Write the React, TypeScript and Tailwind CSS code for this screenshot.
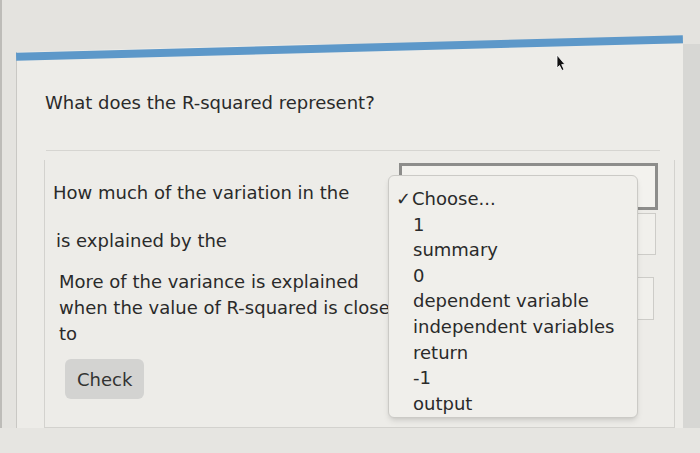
import React from "react";

const options = ["1", "summary", "0", "dependent variable", "independent variables", "return", "-1", "output"];

export default function App() {
    return (
        <div className="relative w-[700px] h-[453px] overflow-hidden bg-[#e4e3df] text-[#2a2a2a] font-['DejaVu_Sans',sans-serif] text-[18px]">
            {/* Top margin above the panel */}
            <div className="h-[44px] border-l-2 border-[#bdbcb8]" />

            <div className="flex h-[384px]">
                <div className="w-[16px] border-l-2 border-[#bdbcb8]" />

                {/* Question panel */}
                <div className="flex-1 flex flex-col bg-[#edece8] border-l border-[#c9c8c4] [clip-path:polygon(0_8px,100%_-10px,100%_100%,0_100%)]">
                    <div className="h-[8px] bg-[#5d98c9] -rotate-[1.5deg] origin-center -ml-px" />
                    <p className="pl-[28px] pt-[41px] leading-[20px]">What does the R-squared represent?</p>
                    <div className="mt-[37px] ml-[29px] mr-[23px] h-px bg-[#d6d5d1]" />

                    <div className="mt-[9px] ml-[27px] mr-[8px] flex-1 border-l border-b border-r border-[#d3d2ce] pl-[8px] pt-[3px] flex flex-col">
                        <div className="flex h-[50px]">
                            <span className="w-[346px] shrink-0 mt-[20px] leading-[20px] whitespace-nowrap">How much of the variation in the</span>
                            <div className="w-[259px] h-[47px] border-[3px] border-[#8d8d8b] bg-[#f3f2ee]" />
                        </div>
                        <div className="flex h-[56px]">
                            <span className="w-[346px] shrink-0 mt-[18px] leading-[20px] pl-[3px] whitespace-nowrap">is explained by the</span>
                            <div className="w-[257px] h-[42px] border border-[#cdccc8] bg-[#f1f0ec]" />
                        </div>
                        <div className="flex">
                            <p className="w-[346px] shrink-0 leading-[26px] pl-[6px] whitespace-nowrap">
                                More of the variance is explained
                                <br />
                                when the value of R-squared is closer
                                <br />
                                to
                            </p>
                            <div className="mt-[8px] w-[255px] h-[43px] border border-[#cdccc8] bg-[#f1f0ec]" />
                        </div>
                        <button className="mt-[12px] ml-[12px] w-[79px] h-[40px] rounded-md bg-[#d3d3d1] text-left pl-[12px] text-[#333]">
                            Check
                        </button>
                    </div>
                </div>

                <div className="w-[17px] bg-[#d7d7d4]" />
            </div>

            <div className="bg-[#e6e5e1] h-[25px]" />

            {/* Open select menu */}
            <div className="absolute left-[388px] top-[175px] w-[250px] h-[243px] rounded-md border border-[#cbcac6] bg-[#f0efeb] shadow-md pl-[23px] pt-[10px]">
                <div className="leading-[25.6px] whitespace-nowrap">
                    <span className="inline-block w-[16px] -ml-[16px] text-[18px]">✓</span>
                    Choose...
                </div>
                {options.map((o) => (
                    <div key={o} className="leading-[25.6px] pl-[1px] whitespace-nowrap">
                        {o}
                    </div>
                ))}
            </div>

            {/* Mouse pointer */}
            <svg className="absolute left-[553px] top-[54px]" width="14" height="18" viewBox="0 0 14 18">
                <path d="M4 1 L4 14 L6.5 11.5 L9 16.5 L11 15.5 L8.7 10.6 L12 10.6 Z" fill="#111" stroke="#fff" strokeWidth="0.8" />
            </svg>
        </div>
    );
}
